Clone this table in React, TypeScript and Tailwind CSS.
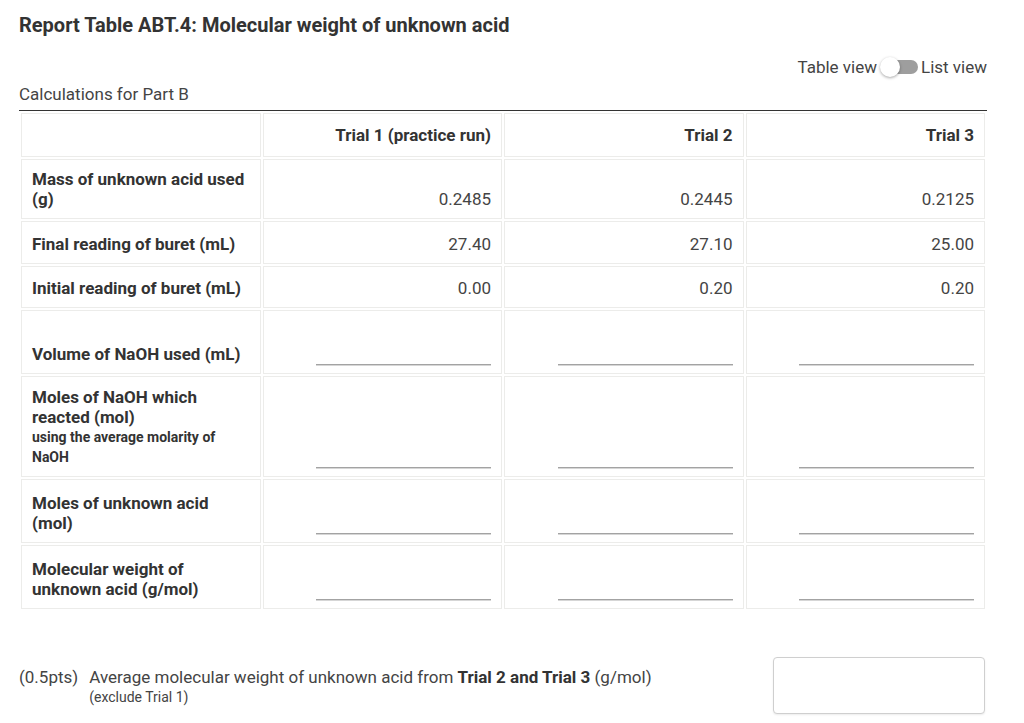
import React from "react";

type Row = {
  label: string;
  note?: string;
  values?: string[];
  height: string;
};

const rows: Row[] = [
  { label: "Mass of unknown acid used (g)", values: ["0.2485", "0.2445", "0.2125"], height: "h-[60px]" },
  { label: "Final reading of buret (mL)", values: ["27.40", "27.10", "25.00"], height: "h-[43px]" },
  { label: "Initial reading of buret (mL)", values: ["0.00", "0.20", "0.20"], height: "h-[42px]" },
  { label: "Volume of NaOH used (mL)", height: "h-[64px]" },
  {
    label: "Moles of NaOH which reacted (mol)",
    note: "using the average molarity of NaOH",
    height: "h-[101px]",
  },
  { label: "Moles of unknown acid (mol)", height: "h-[64px]" },
  { label: "Molecular weight of unknown acid (g/mol)", height: "h-[64px]" },
];

const cell = "border border-[#ececea] px-[10px] pb-[9px] align-bottom";

function Toggle() {
  return (
    <div className="relative mx-[3px] h-[20px] w-[38px]">
      <div className="absolute left-[6px] top-[3px] h-[14px] w-[32px] rounded-full bg-[#9e9e9e]" />
      <div className="absolute left-0 top-0 h-[20px] w-[20px] rounded-full bg-white shadow-[0_1px_3px_rgba(0,0,0,0.35)]" />
    </div>
  );
}

export default function App() {
  return (
    <div className="min-h-[723px] w-[1024px] bg-white pl-[19px] pr-[37px] pt-[13px] font-[Roboto,sans-serif] text-[#333]">
      <h1 className="text-[20px] font-bold leading-[24px]">
        Report Table ABT.4: Molecular weight of unknown acid
      </h1>

      {/* view switch */}
      <div className="mt-[20px] flex h-[20px] items-center justify-end text-[17px] leading-[20px] text-[#444]">
        <span>Table view</span>
        <Toggle />
        <span>List view</span>
      </div>

      <div className="mt-[7px] border-b border-[#333] pb-[6px] text-[17px] leading-[20px] text-[#444]">
        Calculations for Part B
      </div>

      <table className="w-full table-fixed border-separate border-spacing-[2px] text-[17px] leading-[20px]">
        <thead>
          <tr>
            <th className="h-[44px] border border-[#ececea] px-[10px] align-middle" />
            {["Trial 1 (practice run)", "Trial 2", "Trial 3"].map((t) => (
              <th
                key={t}
                className="h-[44px] border border-[#ececea] px-[10px] text-right align-middle font-bold"
              >
                {t}
              </th>
            ))}
          </tr>
        </thead>
        <tbody>
          {rows.map((row) => (
            <tr key={row.label}>
              <td className={`${cell} ${row.height} font-bold`}>
                {row.label}
                {row.note && (
                  <div className="text-[14px] leading-[20px]">{row.note}</div>
                )}
              </td>
              {[0, 1, 2].map((i) => (
                <td key={i} className={`${cell} ${row.height} text-right text-[#444]`}>
                  {row.values ? (
                    row.values[i]
                  ) : (
                    <div className="-mb-[1px] ml-auto h-[42px] w-[175px] border-b border-[#a3a3a3] shadow-[0_1px_0_#d6d6d6]" />
                  )}
                </td>
              ))}
            </tr>
          ))}
        </tbody>
      </table>

      <div className="mt-[46px] flex items-start justify-between">
        <div className="mt-[10px] flex text-[#444]">
          <span className="mr-[11px] shrink-0 text-[17px] leading-[20px]">(0.5pts)</span>
          <div>
            <div className="text-[17px] leading-[20px]">
              Average molecular weight of unknown acid from{" "}
              <b className="font-bold text-[#333]">Trial 2 and Trial 3</b> (g/mol)
            </div>
            <div className="text-[14px] leading-[20px]">(exclude Trial 1)</div>
          </div>
        </div>
        <input
          type="text"
          className="mr-[2px] h-[57px] w-[212px] rounded-[4px] border border-[#cfcfcf] bg-white shadow-[0_1px_2px_rgba(0,0,0,0.08)] outline-none"
        />
      </div>
    </div>
  );
}
